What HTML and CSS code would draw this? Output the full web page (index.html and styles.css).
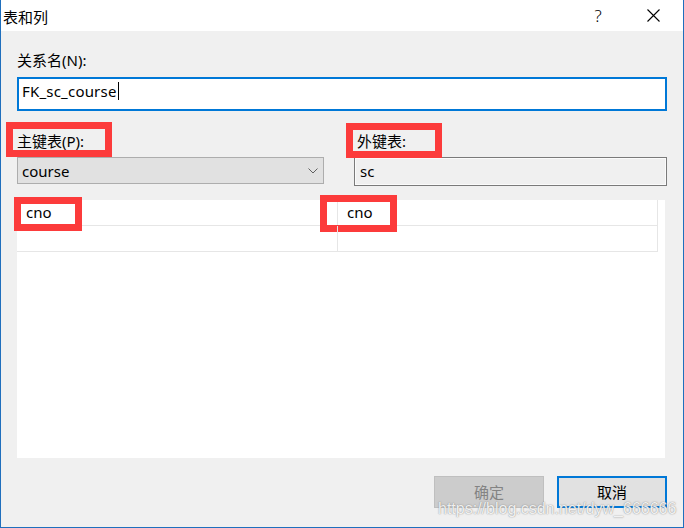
FILE: index.html
```html
<!DOCTYPE html>
<html>
<head>
<meta charset="utf-8">
<link rel="stylesheet" href="styles.css">
</head>
<body>
<div class="window">
  <div class="titlebar">
    <div class="title">表和列</div>
    <div class="caption-btn help">?</div>
    <div class="caption-btn close">
      <svg width="13" height="13" viewBox="0 0 13 13"><path d="M0.5 0.5 L12.5 12.5 M12.5 0.5 L0.5 12.5" stroke="#000" stroke-width="1.1" fill="none"/></svg>
    </div>
  </div>
  <div class="content">
    <div class="label">关系名(N):</div>
    <div class="textbox focused"><span>FK_sc_course</span><span class="caret"></span></div>

    <div class="tables">
      <div class="col col-left">
        <div class="label col-label">主键表(P):<div class="mark mark-pk"></div></div>
        <div class="combo">
          <span>course</span>
          <svg class="chev" width="10" height="6" viewBox="0 0 10 6"><path d="M0.5 0.5 L5 5 L9.5 0.5" stroke="#606060" stroke-width="1" fill="none"/></svg>
        </div>
      </div>
      <div class="col col-right">
        <div class="label col-label fk-label">外键表:<div class="mark mark-fk"></div></div>
        <div class="readonly">sc</div>
      </div>
    </div>

    <div class="grid">
      <div class="row">
        <div class="cell">cno<div class="mark mark-c1"></div></div>
        <div class="cell">cno<div class="mark mark-c2"></div></div>
      </div>
      <div class="row">
        <div class="cell"></div>
        <div class="cell"></div>
      </div>
    </div>

    <div class="buttons">
      <div class="btn disabled">确定</div>
      <div class="btn default">取消</div>
    </div>
  </div>
  <div class="watermark">https://blog.csdn.net/dyw_666666</div>
</div>
</body>
</html>
```
FILE: styles.css
```css
html, body {
  margin: 0;
  padding: 0;
  width: 684px;
  height: 528px;
  overflow: hidden;
  background: #f0f0f0;
}

body {
  font-family: "Noto Sans", "Noto Sans CJK SC", sans-serif;
  font-size: 15px;
  color: #000;
}

.window {
  position: relative;
  box-sizing: border-box;
  width: 684px;
  height: 528px;
  border: 1px solid #1f6fbd;
  border-top: none;
  background: #f0f0f0;
  display: flex;
  flex-direction: column;
}

.titlebar {
  height: 31px;
  background: #fff;
  display: flex;
  align-items: center;
  flex: none;
}

.title {
  flex: 1;
  padding-left: 2px;
  font-size: 15px;
  line-height: 20px;
  padding-top: 3px;
}

.caption-btn {
  width: 56px;
  height: 31px;
  display: flex;
  align-items: center;
  justify-content: center;
}

.help {
  font-size: 17px;
  font-weight: 300;
  line-height: 20px;
  padding-top: 1px;
  box-sizing: border-box;
}

.close {
  margin-right: 1px;
}

.close svg {
  display: block;
  margin-left: -1px;
}

.content {
  flex: 1;
  padding: 19px 16px 0 16px;
}

.label {
  line-height: 20px;
  height: 20px;
  white-space: nowrap;
}

.textbox {
  margin-top: 7px;
  box-sizing: border-box;
  height: 34px;
  background: #fff;
  border: 2px solid #0078d7;
  padding: 2px 3px 0 3px;
  line-height: 20px;
  display: flex;
  align-items: flex-start;
  letter-spacing: 0.2px;
}

.caret {
  display: inline-block;
  width: 1px;
  height: 18px;
  background: #000;
  margin-top: 1px;
  margin-left: 1px;
}

.tables {
  margin-top: 20px;
  display: flex;
  align-items: flex-start;
}

.col-left {
  width: 307px;
}

.col-right {
  margin-left: 30px;
  width: 313px;
}

.col-label {
  position: relative;
}

.fk-label {
  padding-left: 3px;
}

.combo {
  margin-top: 6px;
  box-sizing: border-box;
  height: 27px;
  background: #e1e1e1;
  border: 1px solid #adadad;
  padding: 0 4px;
  line-height: 24px;
  display: flex;
  align-items: center;
  justify-content: space-between;
}

.chev {
  display: block;
  margin-right: 1px;
}

.readonly {
  margin-top: 6px;
  box-sizing: border-box;
  height: 29px;
  background: #f0f0f0;
  border: 1px solid #7a7a7a;
  box-shadow: inset 0 0 0 1px #fbfbfb;
  padding: 0 5px;
  line-height: 26px;
}

.grid {
  margin-top: 14px;
  width: 648px;
  height: 258px;
  background: #fff;
}

.row {
  display: flex;
}

.cell {
  position: relative;
  box-sizing: border-box;
  width: 320px;
  height: 26px;
  border-right: 1px solid #e6e6e6;
  border-bottom: 1px solid #e6e6e6;
  padding-left: 9px;
  line-height: 25px;
}

.row .cell:first-child {
  width: 321px;
}

.buttons {
  margin-top: 18px;
  display: flex;
  justify-content: flex-end;
  gap: 13px;
}

.btn {
  box-sizing: border-box;
  width: 110px;
  height: 32px;
  display: flex;
  align-items: center;
  justify-content: center;
  line-height: 20px;
}

.btn.disabled {
  background: #cccccc;
  border: 1px solid #bfbfbf;
  color: #838383;
}

.btn.default {
  background: #e1e1e1;
  border: 2px solid #0078d7;
  color: #000;
}

.mark {
  position: absolute;
  box-sizing: border-box;
  border: 7px solid #fc3b3b;
  pointer-events: none;
}

.mark-pk {
  left: -11px;
  top: -9px;
  width: 106px;
  height: 35px;
}

.mark-fk {
  left: -8px;
  top: -8px;
  width: 96px;
  height: 35px;
}

.mark-c1 {
  left: -3px;
  top: -3px;
  width: 68px;
  height: 34px;
}

.mark-c2 {
  left: -18px;
  top: -5px;
  width: 77px;
  height: 37px;
}

.watermark {
  position: absolute;
  left: 437px;
  top: 500px;
  font-family: "Liberation Sans", Arial, sans-serif;
  font-size: 16px;
  line-height: 18px;
  color: rgba(255, 255, 255, 0.88);
  text-shadow: 0 0 1px rgba(100, 100, 100, 0.7), 0 0 2px rgba(140, 140, 140, 0.4);
  white-space: nowrap;
  pointer-events: none;
}
```
